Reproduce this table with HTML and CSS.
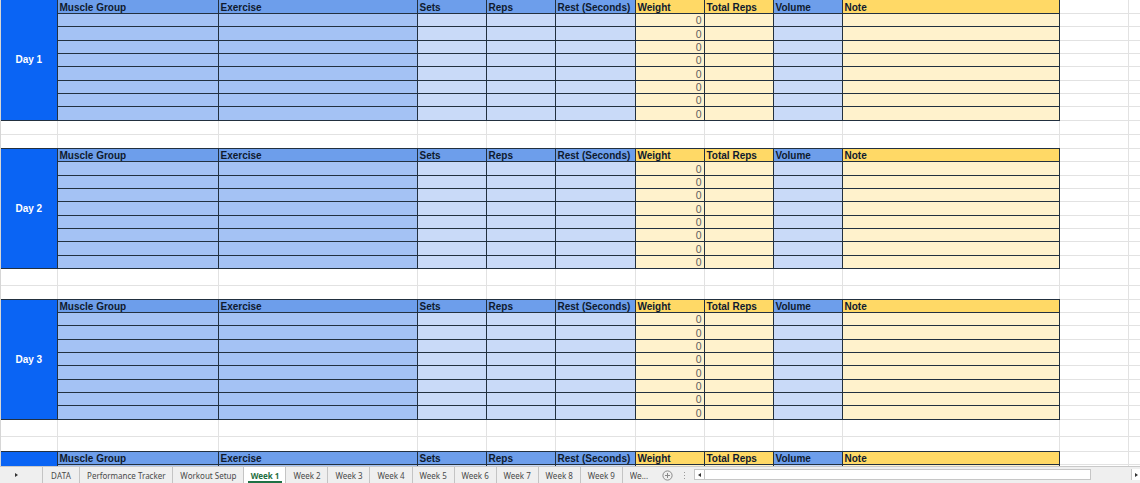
FILE: index.html
```html
<!DOCTYPE html>
<html>
<head>
<meta charset="utf-8">
<link rel="stylesheet" href="styles.css">
</head>
<body>
<div class="sheet">
<table class="grid">
<colgroup>
<col class="c-a"><col class="c-b"><col class="c-c"><col class="c-d"><col class="c-e"><col class="c-f"><col class="c-g"><col class="c-h"><col class="c-i"><col class="c-j"><col class="c-k"><col class="c-l">
</colgroup>
<tbody>
<tr class="r hd"><td class="day" rowspan="9">Day 1</td><th class="hb">Muscle Group</th><th class="hb">Exercise</th><th class="hb">Sets</th><th class="hb">Reps</th><th class="hb">Rest (Seconds)</th><th class="hy">Weight</th><th class="hy">Total Reps</th><th class="hb">Volume</th><th class="hy">Note</th><td class="x"></td><td class="x"></td></tr>
<tr class="r"><td class="b2"></td><td class="b2"></td><td class="b3"></td><td class="b3"></td><td class="b3"></td><td class="y n">0</td><td class="y"></td><td class="b3"></td><td class="y"></td><td class="x"></td><td class="x"></td></tr>
<tr class="r"><td class="b2"></td><td class="b2"></td><td class="b3"></td><td class="b3"></td><td class="b3"></td><td class="y n">0</td><td class="y"></td><td class="b3"></td><td class="y"></td><td class="x"></td><td class="x"></td></tr>
<tr class="r"><td class="b2"></td><td class="b2"></td><td class="b3"></td><td class="b3"></td><td class="b3"></td><td class="y n">0</td><td class="y"></td><td class="b3"></td><td class="y"></td><td class="x"></td><td class="x"></td></tr>
<tr class="r"><td class="b2"></td><td class="b2"></td><td class="b3"></td><td class="b3"></td><td class="b3"></td><td class="y n">0</td><td class="y"></td><td class="b3"></td><td class="y"></td><td class="x"></td><td class="x"></td></tr>
<tr class="r"><td class="b2"></td><td class="b2"></td><td class="b3"></td><td class="b3"></td><td class="b3"></td><td class="y n">0</td><td class="y"></td><td class="b3"></td><td class="y"></td><td class="x"></td><td class="x"></td></tr>
<tr class="r"><td class="b2"></td><td class="b2"></td><td class="b3"></td><td class="b3"></td><td class="b3"></td><td class="y n">0</td><td class="y"></td><td class="b3"></td><td class="y"></td><td class="x"></td><td class="x"></td></tr>
<tr class="r"><td class="b2"></td><td class="b2"></td><td class="b3"></td><td class="b3"></td><td class="b3"></td><td class="y n">0</td><td class="y"></td><td class="b3"></td><td class="y"></td><td class="x"></td><td class="x"></td></tr>
<tr class="r"><td class="b2"></td><td class="b2"></td><td class="b3"></td><td class="b3"></td><td class="b3"></td><td class="y n">0</td><td class="y"></td><td class="b3"></td><td class="y"></td><td class="x"></td><td class="x"></td></tr>

<tr class="g g1a"><td></td><td></td><td></td><td></td><td></td><td></td><td></td><td></td><td></td><td></td><td class="x"></td><td class="x"></td></tr>
<tr class="g pre g1b"><td></td><td></td><td></td><td></td><td></td><td></td><td></td><td></td><td></td><td></td><td class="x"></td><td class="x"></td></tr>

<tr class="r hd"><td class="day" rowspan="9">Day 2</td><th class="hb">Muscle Group</th><th class="hb">Exercise</th><th class="hb">Sets</th><th class="hb">Reps</th><th class="hb">Rest (Seconds)</th><th class="hy">Weight</th><th class="hy">Total Reps</th><th class="hb">Volume</th><th class="hy">Note</th><td class="x"></td><td class="x"></td></tr>
<tr class="r"><td class="b2"></td><td class="b2"></td><td class="b3"></td><td class="b3"></td><td class="b3"></td><td class="y n">0</td><td class="y"></td><td class="b3"></td><td class="y"></td><td class="x"></td><td class="x"></td></tr>
<tr class="r"><td class="b2"></td><td class="b2"></td><td class="b3"></td><td class="b3"></td><td class="b3"></td><td class="y n">0</td><td class="y"></td><td class="b3"></td><td class="y"></td><td class="x"></td><td class="x"></td></tr>
<tr class="r"><td class="b2"></td><td class="b2"></td><td class="b3"></td><td class="b3"></td><td class="b3"></td><td class="y n">0</td><td class="y"></td><td class="b3"></td><td class="y"></td><td class="x"></td><td class="x"></td></tr>
<tr class="r"><td class="b2"></td><td class="b2"></td><td class="b3"></td><td class="b3"></td><td class="b3"></td><td class="y n">0</td><td class="y"></td><td class="b3"></td><td class="y"></td><td class="x"></td><td class="x"></td></tr>
<tr class="r"><td class="b2"></td><td class="b2"></td><td class="b3"></td><td class="b3"></td><td class="b3"></td><td class="y n">0</td><td class="y"></td><td class="b3"></td><td class="y"></td><td class="x"></td><td class="x"></td></tr>
<tr class="r"><td class="b2"></td><td class="b2"></td><td class="b3"></td><td class="b3"></td><td class="b3"></td><td class="y n">0</td><td class="y"></td><td class="b3"></td><td class="y"></td><td class="x"></td><td class="x"></td></tr>
<tr class="r"><td class="b2"></td><td class="b2"></td><td class="b3"></td><td class="b3"></td><td class="b3"></td><td class="y n">0</td><td class="y"></td><td class="b3"></td><td class="y"></td><td class="x"></td><td class="x"></td></tr>
<tr class="r"><td class="b2"></td><td class="b2"></td><td class="b3"></td><td class="b3"></td><td class="b3"></td><td class="y n">0</td><td class="y"></td><td class="b3"></td><td class="y"></td><td class="x"></td><td class="x"></td></tr>

<tr class="g g2a"><td></td><td></td><td></td><td></td><td></td><td></td><td></td><td></td><td></td><td></td><td class="x"></td><td class="x"></td></tr>
<tr class="g pre g2b"><td></td><td></td><td></td><td></td><td></td><td></td><td></td><td></td><td></td><td></td><td class="x"></td><td class="x"></td></tr>

<tr class="r hd"><td class="day" rowspan="9">Day 3</td><th class="hb">Muscle Group</th><th class="hb">Exercise</th><th class="hb">Sets</th><th class="hb">Reps</th><th class="hb">Rest (Seconds)</th><th class="hy">Weight</th><th class="hy">Total Reps</th><th class="hb">Volume</th><th class="hy">Note</th><td class="x"></td><td class="x"></td></tr>
<tr class="r"><td class="b2"></td><td class="b2"></td><td class="b3"></td><td class="b3"></td><td class="b3"></td><td class="y n">0</td><td class="y"></td><td class="b3"></td><td class="y"></td><td class="x"></td><td class="x"></td></tr>
<tr class="r"><td class="b2"></td><td class="b2"></td><td class="b3"></td><td class="b3"></td><td class="b3"></td><td class="y n">0</td><td class="y"></td><td class="b3"></td><td class="y"></td><td class="x"></td><td class="x"></td></tr>
<tr class="r"><td class="b2"></td><td class="b2"></td><td class="b3"></td><td class="b3"></td><td class="b3"></td><td class="y n">0</td><td class="y"></td><td class="b3"></td><td class="y"></td><td class="x"></td><td class="x"></td></tr>
<tr class="r"><td class="b2"></td><td class="b2"></td><td class="b3"></td><td class="b3"></td><td class="b3"></td><td class="y n">0</td><td class="y"></td><td class="b3"></td><td class="y"></td><td class="x"></td><td class="x"></td></tr>
<tr class="r"><td class="b2"></td><td class="b2"></td><td class="b3"></td><td class="b3"></td><td class="b3"></td><td class="y n">0</td><td class="y"></td><td class="b3"></td><td class="y"></td><td class="x"></td><td class="x"></td></tr>
<tr class="r"><td class="b2"></td><td class="b2"></td><td class="b3"></td><td class="b3"></td><td class="b3"></td><td class="y n">0</td><td class="y"></td><td class="b3"></td><td class="y"></td><td class="x"></td><td class="x"></td></tr>
<tr class="r"><td class="b2"></td><td class="b2"></td><td class="b3"></td><td class="b3"></td><td class="b3"></td><td class="y n">0</td><td class="y"></td><td class="b3"></td><td class="y"></td><td class="x"></td><td class="x"></td></tr>
<tr class="r"><td class="b2"></td><td class="b2"></td><td class="b3"></td><td class="b3"></td><td class="b3"></td><td class="y n">0</td><td class="y"></td><td class="b3"></td><td class="y"></td><td class="x"></td><td class="x"></td></tr>

<tr class="g g3a"><td></td><td></td><td></td><td></td><td></td><td></td><td></td><td></td><td></td><td></td><td class="x"></td><td class="x"></td></tr>
<tr class="g pre g3b"><td></td><td></td><td></td><td></td><td></td><td></td><td></td><td></td><td></td><td></td><td class="x"></td><td class="x"></td></tr>

<tr class="r hd"><td class="day" rowspan="9">Day 4</td><th class="hb">Muscle Group</th><th class="hb">Exercise</th><th class="hb">Sets</th><th class="hb">Reps</th><th class="hb">Rest (Seconds)</th><th class="hy">Weight</th><th class="hy">Total Reps</th><th class="hb">Volume</th><th class="hy">Note</th><td class="x"></td><td class="x"></td></tr>
<tr class="r"><td class="b2"></td><td class="b2"></td><td class="b3"></td><td class="b3"></td><td class="b3"></td><td class="y n">0</td><td class="y"></td><td class="b3"></td><td class="y"></td><td class="x"></td><td class="x"></td></tr>
<tr class="r"><td class="b2"></td><td class="b2"></td><td class="b3"></td><td class="b3"></td><td class="b3"></td><td class="y n">0</td><td class="y"></td><td class="b3"></td><td class="y"></td><td class="x"></td><td class="x"></td></tr>
</tbody>
</table>
</div>

<div class="tabbar">
  <div class="nav"><span class="tri-r"></span></div>
  <div class="tab wide">DATA</div>
  <div class="tab">Performance Tracker</div>
  <div class="tab">Workout Setup</div>
  <div class="tab active"><span>Week 1</span></div>
  <div class="tab">Week 2</div>
  <div class="tab">Week 3</div>
  <div class="tab">Week 4</div>
  <div class="tab">Week 5</div>
  <div class="tab">Week 6</div>
  <div class="tab">Week 7</div>
  <div class="tab">Week 8</div>
  <div class="tab">Week 9</div>
  <div class="tab more"><span class="cut">Week 10</span> ...</div>
  <div class="add">
    <svg width="11" height="11" viewBox="0 0 11 11"><circle cx="5.5" cy="5.5" r="4.6" fill="none" stroke="#8a8a8a" stroke-width="1"/><path d="M5.5 3v5M3 5.5h5" stroke="#8a8a8a" stroke-width="1"/></svg>
  </div>
  <div class="dots"><i></i><i></i><i></i></div>
  <div class="hscroll">
    <div class="hs-btn"><span class="tri-l"></span></div>
    <div class="hs-track"></div>
  </div>
  <div class="hs-end"><span class="tri-r"></span></div>
</div>
</body>
</html>
```

FILE: styles.css
```css
html, body {
  margin: 0;
  padding: 0;
  background: #ffffff;
  width: 1140px;
  height: 483px;
  overflow: hidden;
  font-family: "Liberation Sans", Arial, sans-serif;
}

.sheet {
  height: 466px;
  overflow: hidden;
  border-left: 1px solid #d6d6d6;
  box-sizing: border-box;
}

.grid {
  border-collapse: collapse;
  table-layout: fixed;
  width: 1237px;
  font-size: 10px;
  color: #0f1a2e;
}

.c-a { width: 56px; }
.c-b { width: 161px; }
.c-c { width: 199px; }
.c-d { width: 69px; }
.c-e { width: 69px; }
.c-f { width: 80px; }
.c-g { width: 69px; }
.c-h { width: 69px; }
.c-i { width: 69px; }
.c-j { width: 217px; }
.c-k { width: 69px; }
.c-l { width: 110px; }

.grid td, .grid th {
  padding: 0 2px;
  line-height: 11px;
  vertical-align: bottom;
  white-space: nowrap;
  overflow: hidden;
  text-align: left;
}

.r { height: 13.35px; }
.g1a { height: 14.2px; }
.g1b { height: 14.2px; }
.g2a { height: 16.6px; }
.g2b { height: 14px; }
.g3a { height: 17px; }
.g3b { height: 15px; }

/* block cells: dark grid lines */
.r td, .r th {
  border-right: 1px solid #22303f;
  border-bottom: 1px solid #22303f;
}
.r td.x {
  border-right: 1px solid #e2e2e2;
  border-bottom: 1px solid #e2e2e2;
  background: #ffffff;
}

/* blank spreadsheet rows */
.g td {
  border-right: 1px solid #e2e2e2;
  border-bottom: 1px solid #e2e2e2;
}
.g.pre td {
  border-bottom: 1px solid #22303f;
}
.g.pre td.x {
  border-bottom: 1px solid #e2e2e2;
}

.day {
  background: #0a64f4;
  color: #ffffff;
  font-weight: bold;
  text-align: center !important;
  vertical-align: middle !important;
  font-size: 10px;
}

.grid th {
  font-weight: bold;
  padding-bottom: 0;
}
.hb { background: #6d9eeb; }
.hy { background: #ffd966; }
.b2 { background: #a4c2f4; }
.b3 { background: #c9daf8; }
.y { background: #fff2cc; }

.grid td.n {
  text-align: right;
  color: #5c5c5c;
  font-size: 10.5px;
  padding-right: 2px;
}

/* sheet tab bar */
.tabbar {
  height: 17px;
  border-top: 1px solid #c9c9c9;
  box-sizing: border-box;
  background: #efefef;
  display: flex;
  align-items: stretch;
  font-family: "Noto Sans", "Open Sans", sans-serif;
  font-size: 8px;
  color: #4a4a4a;
}

.nav {
  width: 42px;
  display: flex;
  align-items: center;
  padding-left: 15px;
  box-sizing: border-box;
}

.tri-r {
  width: 0;
  height: 0;
  border-top: 2.5px solid transparent;
  border-bottom: 2.5px solid transparent;
  border-left: 3px solid #333;
}
.tri-l {
  width: 0;
  height: 0;
  border-top: 2.5px solid transparent;
  border-bottom: 2.5px solid transparent;
  border-right: 3px solid #333;
}

.tab {
  position: relative;
  display: flex;
  align-items: center;
  padding: 0 6.8px 0 7px;
  border-left: 1px solid #c4c4c4;
  line-height: 15px;
  white-space: nowrap;
}
.tab.wide {
  padding: 0 8px 0 8px;
  letter-spacing: 0.2px;
}

.tab.active {
  background: #ffffff;
  color: #1e6e41;
  font-weight: bold;
  padding: 0 6px 0 6.4px;
}
.tab.active span {
  position: relative;
  height: 100%;
  display: flex;
  align-items: center;
}
.tab.active::after {
  content: "";
  position: absolute;
  left: 4px;
  right: 3px;
  bottom: 0;
  height: 2px;
  background: #1e7145;
}

.tab.more {
  padding-right: 8px;
}
.cut {
  display: inline-block;
  width: 12px;
  overflow: hidden;
  vertical-align: top;
}

.add {
  display: flex;
  align-items: center;
  padding-left: 6px;
  padding-right: 6px;
}

.dots {
  display: flex;
  flex-direction: column;
  justify-content: center;
  gap: 2px;
  width: 10px;
  align-items: center;
}
.dots i {
  display: block;
  width: 1px;
  height: 1px;
  background: #9a9a9a;
}

.hscroll {
  margin-left: 5px;
  margin-top: 2px;
  width: 397px;
  height: 11px;
  background: #ffffff;
  border: 1px solid #c6c6c6;
  box-sizing: border-box;
  display: flex;
}
.hs-btn {
  width: 9px;
  border-right: 1px solid #c6c6c6;
  display: flex;
  align-items: center;
  justify-content: center;
}
.hs-track {
  flex: 1;
}

.hs-end {
  margin-left: auto;
  width: 8px;
  display: flex;
  align-items: center;
  justify-content: center;
  margin-top: 2px;
  height: 11px;
  background: #ffffff;
  border-left: 1px solid #c6c6c6;
}
```
